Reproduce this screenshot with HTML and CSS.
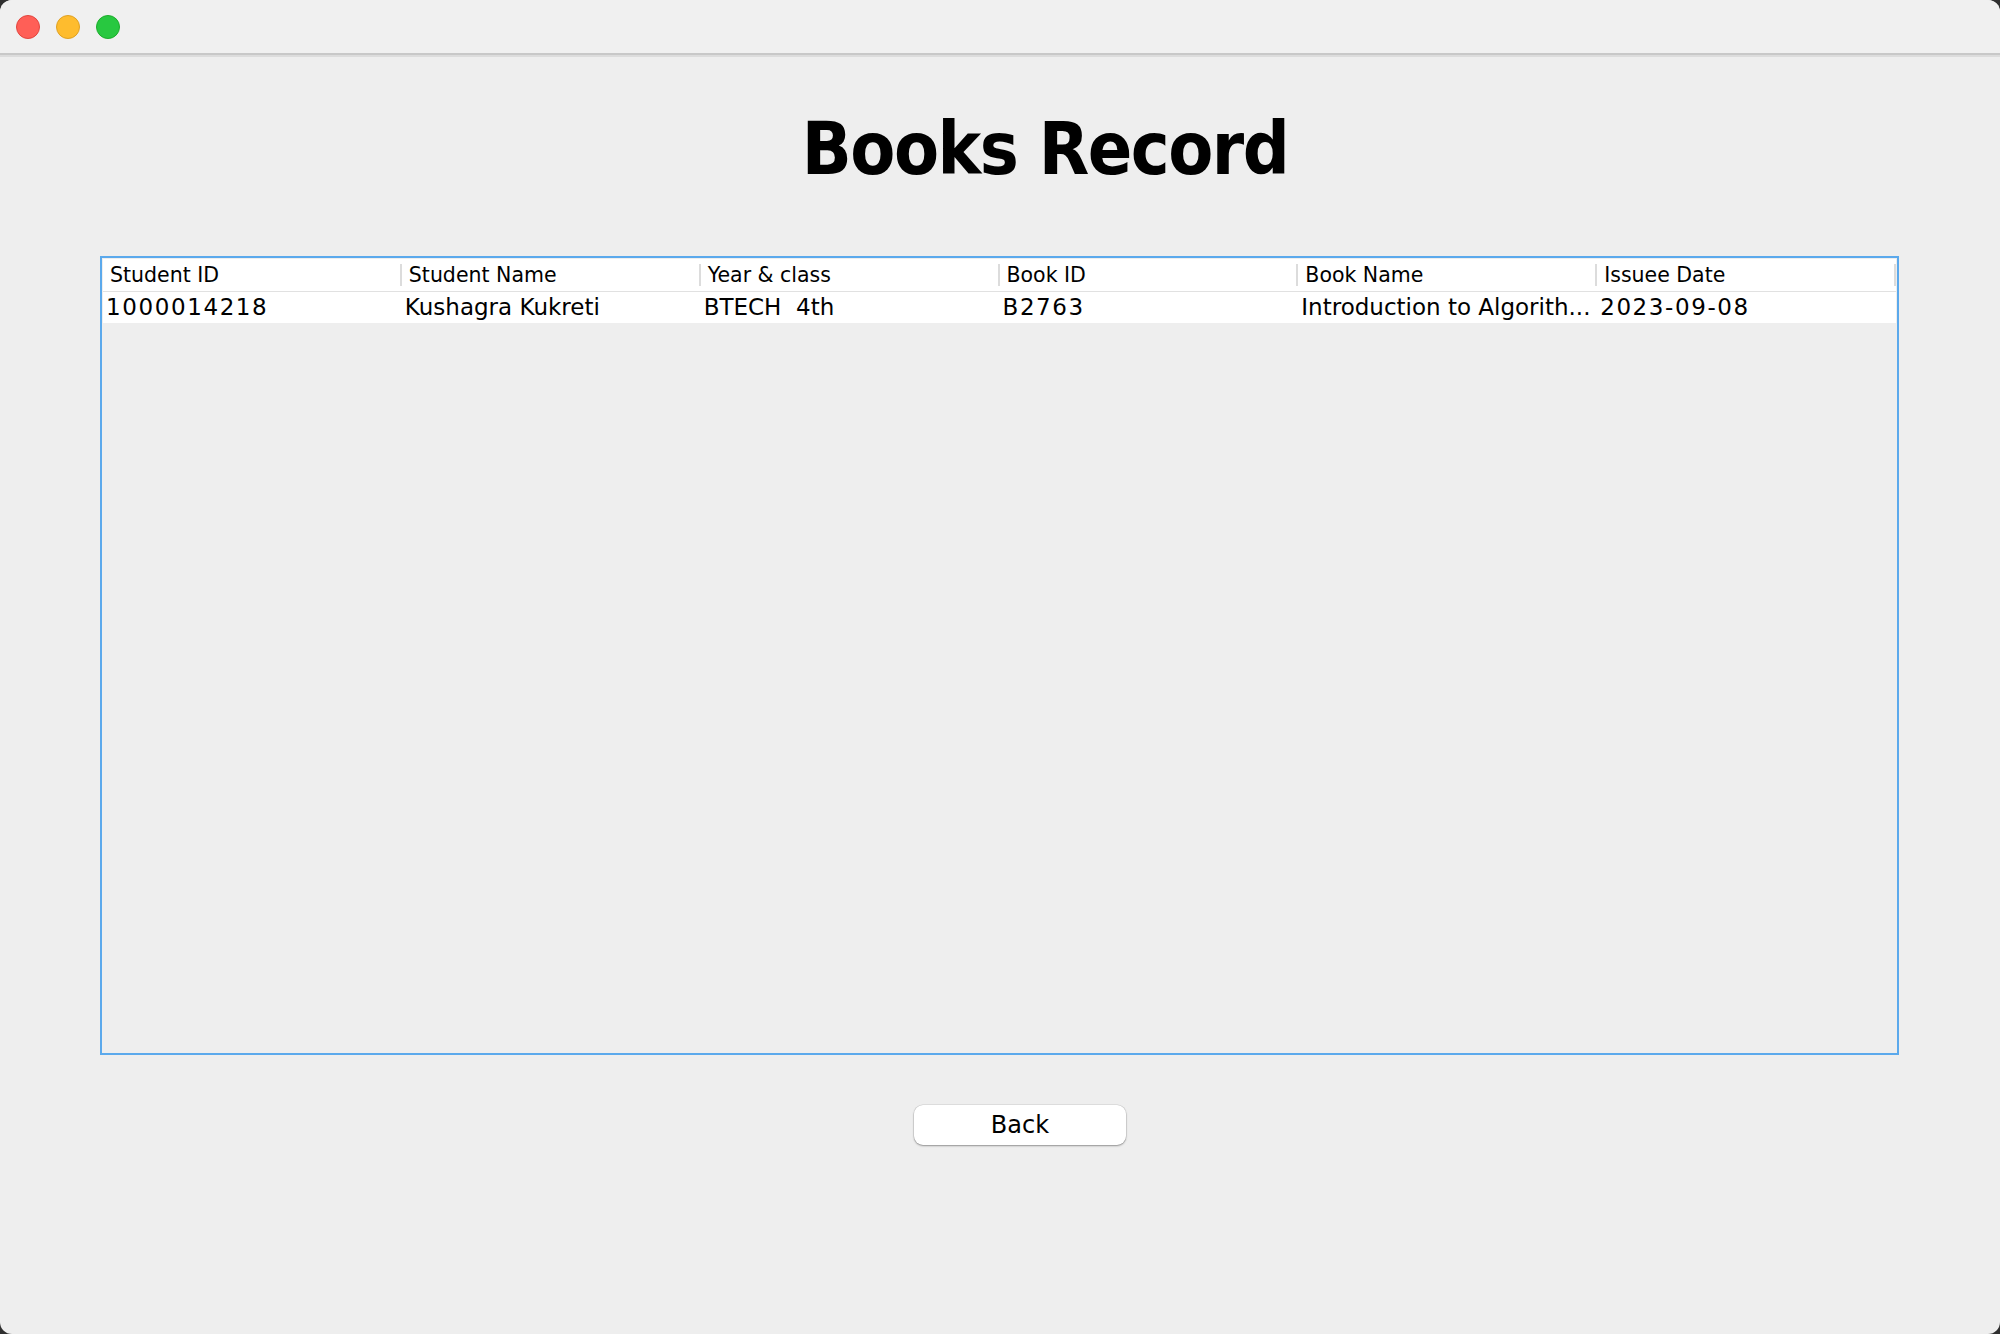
FILE: index.html
```html
<!DOCTYPE html>
<html lang="en">
<head>
<meta charset="utf-8">
<title>Books Record</title>
<link rel="stylesheet" href="styles.css">
</head>
<body>
<div class="window">
  <div class="titlebar">
    <span class="light red"></span>
    <span class="light yellow"></span>
    <span class="light green"></span>
  </div>
  <div class="content">
    <h1 class="title">Books Record</h1>
    <div class="table">
      <div class="head">
        <div class="hcell">Student ID</div>
        <div class="hcell">Student Name</div>
        <div class="hcell">Year &amp; class</div>
        <div class="hcell">Book ID</div>
        <div class="hcell">Book Name</div>
        <div class="hcell">Issuee Date</div>
      </div>
      <div class="row">
        <div class="cell num">1000014218</div>
        <div class="cell">Kushagra Kukreti</div>
        <div class="cell">BTECH  4th</div>
        <div class="cell num">B2763</div>
        <div class="cell">Introduction to Algorith...</div>
        <div class="cell num">2023-09-08</div>
      </div>
    </div>
    <div class="actions">
      <button class="btn" type="button">Back</button>
    </div>
  </div>
</div>
</body>
</html>
```
FILE: styles.css
```css
html, body {
  margin: 0;
  padding: 0;
  background: #303030;
}
body {
  width: 2000px;
  height: 1334px;
  overflow: hidden;
  font-family: "DejaVu Sans", "Liberation Sans", sans-serif;
  color: #000;
}
.window {
  width: 2000px;
  height: 1334px;
  background: #eeeeee;
  border-radius: 12px;
  overflow: hidden;
  display: flex;
  flex-direction: column;
}
.titlebar {
  height: 57px;
  box-sizing: border-box;
  background: #f0f0f0;
  border-bottom: 2px solid #dcdcdc;
  box-shadow: inset 0 -2px 0 #c8c8c8;
  display: flex;
  align-items: center;
  gap: 16px;
  padding: 0 0 2px 16px;
}
.light {
  width: 24px;
  height: 24px;
  border-radius: 50%;
  box-sizing: border-box;
}
.red { background: #ff5f57; border: 1px solid #e2463f; }
.yellow { background: #febc2e; border: 1px solid #dfa123; }
.green { background: #28c840; border: 1px solid #1dad2b; }
.content {
  display: flex;
  flex-direction: column;
}
.title {
  margin: 55px 0 0 0;
  padding-left: 90px;
  text-align: center;
  font-family: "DejaVu Sans Condensed", "DejaVu Sans", sans-serif;
  font-stretch: condensed;
  font-weight: bold;
  font-size: 73px;
  line-height: 73px;
  letter-spacing: -1.5px;
}
.table {
  margin: 71px 0 0 100px;
  width: 1799px;
  height: 799px;
  box-sizing: border-box;
  border: 2px solid #5ba9ec;
  padding: 1px;
  background: #eeeeee;
}
.head, .row {
  display: grid;
  grid-template-columns: repeat(6, 1fr);
  background: #ffffff;
}
.head {
  height: 33px;
  box-sizing: border-box;
  border-bottom: 1px solid #e1e1e1;
}
.hcell {
  font-size: 20.5px;
  line-height: 32px;
  padding-left: 7px;
  white-space: nowrap;
  overflow: hidden;
  background: linear-gradient(#dcdcdc, #dcdcdc) right 5px / 2px 22px no-repeat;
}
.row {
  height: 31px;
}
.cell {
  font-size: 23px;
  line-height: 31px;
  padding-left: 3px;
  white-space: pre;
  overflow: hidden;
}
.num {
  letter-spacing: 1.6px;
}
.actions {
  display: flex;
  justify-content: center;
  padding-left: 40px;
  margin-top: 50px;
}
.btn {
  width: 212px;
  height: 40px;
  background: #ffffff;
  border: none;
  border-radius: 9px;
  box-shadow: 0 1px 2px rgba(0,0,0,0.35), 0 0 0 0.5px rgba(0,0,0,0.12);
  font-family: "DejaVu Sans", "Liberation Sans", sans-serif;
  font-size: 24px;
  line-height: 40px;
  padding: 0;
  color: #000;
}
```
